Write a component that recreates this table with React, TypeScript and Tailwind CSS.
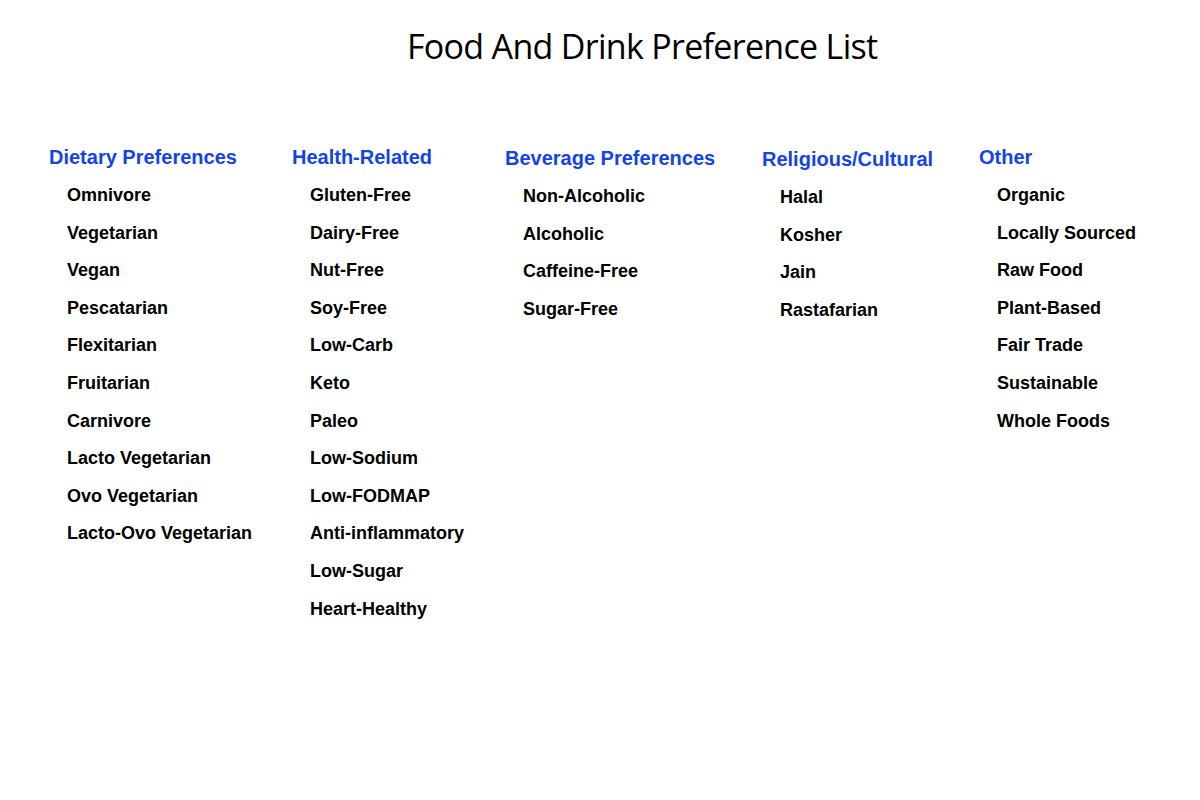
import React from 'react';

// Preference groups shown as columns
interface PreferenceGroup {
  title: string;
  width: string;
  offset: string;
  items: string[];
}

const groups: PreferenceGroup[] = [
  {
    title: 'Dietary Preferences',
    width: 'w-[243px]',
    offset: 'mt-0',
    items: [
      'Omnivore',
      'Vegetarian',
      'Vegan',
      'Pescatarian',
      'Flexitarian',
      'Fruitarian',
      'Carnivore',
      'Lacto Vegetarian',
      'Ovo Vegetarian',
      'Lacto-Ovo Vegetarian',
    ],
  },
  {
    title: 'Health-Related',
    width: 'w-[213px]',
    offset: 'mt-0',
    items: [
      'Gluten-Free',
      'Dairy-Free',
      'Nut-Free',
      'Soy-Free',
      'Low-Carb',
      'Keto',
      'Paleo',
      'Low-Sodium',
      'Low-FODMAP',
      'Anti-inflammatory',
      'Low-Sugar',
      'Heart-Healthy',
    ],
  },
  {
    title: 'Beverage Preferences',
    width: 'w-[257px]',
    offset: 'mt-[1px]',
    items: ['Non-Alcoholic', 'Alcoholic', 'Caffeine-Free', 'Sugar-Free'],
  },
  {
    title: 'Religious/Cultural',
    width: 'w-[217px]',
    offset: 'mt-[2px]',
    items: ['Halal', 'Kosher', 'Jain', 'Rastafarian'],
  },
  {
    title: 'Other',
    width: 'w-[200px]',
    offset: 'mt-0',
    items: [
      'Organic',
      'Locally Sourced',
      'Raw Food',
      'Plant-Based',
      'Fair Trade',
      'Sustainable',
      'Whole Foods',
    ],
  },
];

const App: React.FC = () => {
  return (
    <div className="w-[1200px] h-[800px] bg-white">
      <h1 className="pt-[22px] pl-[407px] text-[34px] leading-[48px] text-black font-['Open_Sans',sans-serif] tracking-[-0.7px]">
        Food And Drink Preference List
      </h1>

      <div className="flex pl-[49px] mt-[76px] font-['Liberation_Sans',Arial,sans-serif]">
        {groups.map((group) => (
          <div key={group.title} className={`${group.width} ${group.offset} shrink-0`}>
            <h2 className="text-[20px] leading-[22px] font-bold text-[#1443eb]">
              {group.title}
            </h2>
            <ul className="mt-[17px] pl-[18px]">
              {group.items.map((item) => (
                <li
                  key={item}
                  className="text-[18px] leading-[20px] font-bold text-black mb-[17.6px]"
                >
                  {item}
                </li>
              ))}
            </ul>
          </div>
        ))}
      </div>
    </div>
  );
};

export default App;
